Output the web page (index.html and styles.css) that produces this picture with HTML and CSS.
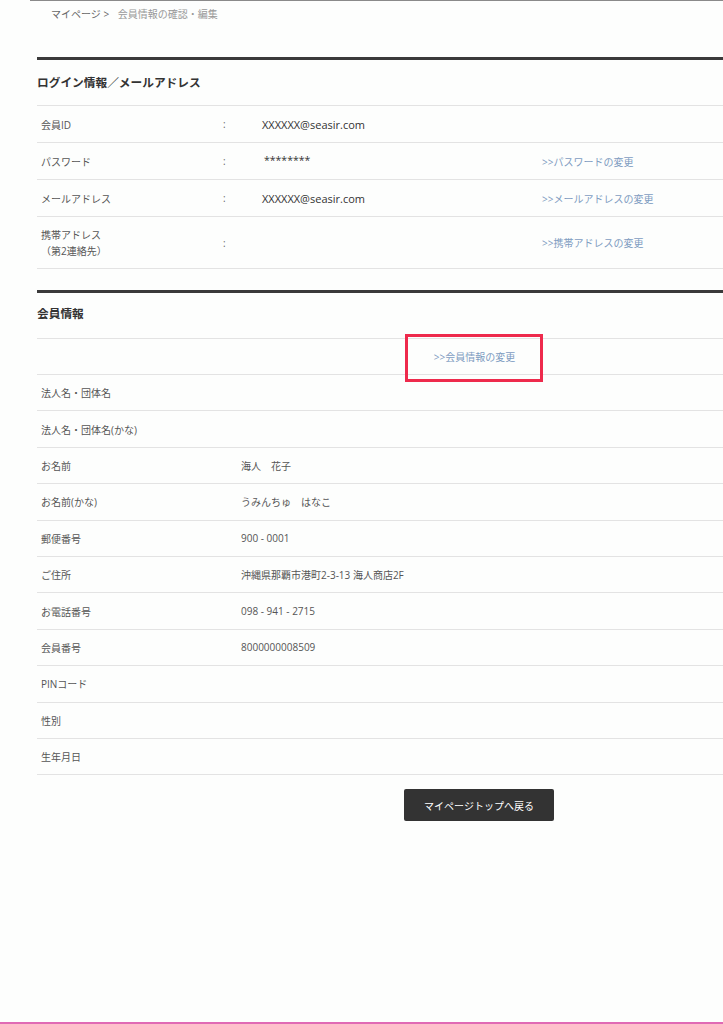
FILE: index.html
```html
<!DOCTYPE html>
<html lang="ja">
<head>
    <meta charset="UTF-8">
    <meta name="viewport" content="width=device-width, initial-scale=1.0">
    <title>会員情報の確認・編集</title>
    <link rel="stylesheet" href="styles.css">
</head>
<body>
    <div class="page">
        <div class="frame">
            <p class="breadcrumb">
                <span class="crumb-link">マイページ &gt;</span>
                <span class="crumb-current">会員情報の確認・編集</span>
            </p>

            <section class="block login">
                <h2>ログイン情報／メールアドレス</h2>
                <div class="login-row">
                    <div class="label">会員ID</div>
                    <div class="colon">:</div>
                    <div class="value strong">XXXXXX@seasir.com</div>
                    <div class="action"></div>
                </div>
                <div class="login-row">
                    <div class="label">パスワード</div>
                    <div class="colon">:</div>
                    <div class="value strong pass">********</div>
                    <div class="action"><a href="#">&gt;&gt;パスワードの変更</a></div>
                </div>
                <div class="login-row">
                    <div class="label">メールアドレス</div>
                    <div class="colon">:</div>
                    <div class="value strong">XXXXXX@seasir.com</div>
                    <div class="action"><a href="#">&gt;&gt;メールアドレスの変更</a></div>
                </div>
                <div class="login-row tall">
                    <div class="label">携帯アドレス<br>（第2連絡先）</div>
                    <div class="colon">:</div>
                    <div class="value"></div>
                    <div class="action"><a href="#">&gt;&gt;携帯アドレスの変更</a></div>
                </div>
            </section>

            <section class="block member">
                <h2>会員情報</h2>
                <div class="member-row edit-row">
                    <div class="cell label"></div>
                    <div class="cell edit">
                        <a href="#">&gt;&gt;会員情報の変更</a>
                        <span class="highlight"></span>
                    </div>
                </div>
                <div class="member-row">
                    <div class="cell label">法人名・団体名</div>
                    <div class="cell value"></div>
                    <div class="cell"></div>
                </div>
                <div class="member-row">
                    <div class="cell label">法人名・団体名(かな)</div>
                    <div class="cell value"></div>
                    <div class="cell"></div>
                </div>
                <div class="member-row">
                    <div class="cell label">お名前</div>
                    <div class="cell value">海人　花子</div>
                    <div class="cell"></div>
                </div>
                <div class="member-row">
                    <div class="cell label">お名前(かな)</div>
                    <div class="cell value">うみんちゅ　はなこ</div>
                    <div class="cell"></div>
                </div>
                <div class="member-row">
                    <div class="cell label">郵便番号</div>
                    <div class="cell value">900 - 0001</div>
                    <div class="cell"></div>
                </div>
                <div class="member-row">
                    <div class="cell label">ご住所</div>
                    <div class="cell value">沖縄県那覇市港町2-3-13 海人商店2F</div>
                    <div class="cell"></div>
                </div>
                <div class="member-row">
                    <div class="cell label">お電話番号</div>
                    <div class="cell value">098 - 941 - 2715</div>
                    <div class="cell"></div>
                </div>
                <div class="member-row">
                    <div class="cell label">会員番号</div>
                    <div class="cell value">8000000008509</div>
                    <div class="cell"></div>
                </div>
                <div class="member-row">
                    <div class="cell label">PINコード</div>
                    <div class="cell value"></div>
                    <div class="cell"></div>
                </div>
                <div class="member-row">
                    <div class="cell label">性別</div>
                    <div class="cell value"></div>
                    <div class="cell"></div>
                </div>
                <div class="member-row">
                    <div class="cell label">生年月日</div>
                    <div class="cell value"></div>
                    <div class="cell"></div>
                </div>
            </section>

            <div class="actions">
                <button onclick="location.href='#'">マイページトップへ戻る</button>
            </div>
        </div>
    </div>
</body>
</html>
```

FILE: styles.css
```css
html, body {
    margin: 0;
    height: 100%;
}

body {
    font-family: "Open Sans", "Noto Sans CJK JP", sans-serif;
    font-size: 10px;
    color: #555;
    background-color: #fdfefd;
}

.page {
    min-height: 100vh;
    box-sizing: border-box;
    border-bottom: 2px solid #e06ab4;
}

.frame {
    margin-left: 30px;
    padding-left: 7px;
    border-top: 1px solid #8a8a8a;
}

.breadcrumb {
    margin: 0;
    padding: 7px 0 0 14px;
    line-height: 12px;
}

.crumb-link {
    color: #666;
    margin-right: 6px;
}

.crumb-current {
    color: #999;
}

.block {
    border-top: 3px solid #3a3a3a;
}

.block h2 {
    margin: 0;
    font-size: 11.7px;
    font-weight: bold;
    color: #333;
    border-bottom: 1px solid #e3e3e3;
}

.login {
    margin-top: 37px;
}

.login h2 {
    line-height: 44px;
    padding-bottom: 1px;
}

.login-row {
    display: grid;
    grid-template-columns: 186px 39px 280px 1fr;
    align-items: center;
    height: 37px;
    box-sizing: border-box;
    border-bottom: 1px solid #e3e3e3;
}

.login-row.tall {
    height: 52px;
    line-height: 16px;
}

.login-row .label {
    padding-left: 4px;
}

.colon {
    color: #666;
}

.value.strong {
    color: #333;
    font-size: 11px;
}

.value.pass {
    padding-left: 2px;
    margin-top: -3px;
    font-size: 10.5px;
}

.action a,
.edit a {
    color: #7d9cc1;
    text-decoration: none;
}

.member {
    margin-top: 21px;
}

.member h2 {
    line-height: 41px;
    padding-bottom: 4px;
}

.member-row {
    display: grid;
    grid-template-columns: 193px 249px 1fr;
    height: 36.4px;
}

.edit-row {
    height: 36px;
}

.cell {
    display: flex;
    align-items: center;
    border-bottom: 1px solid #e3e3e3;
}

.member-row .label {
    padding-left: 4px;
}

.member-row .value {
    padding-left: 11px;
}

.edit {
    grid-column: 2 / 4;
    justify-content: center;
    position: relative;
}

.edit a {
    margin-left: -4px;
}

.highlight {
    position: absolute;
    left: 175px;
    top: -5px;
    width: 138px;
    height: 48px;
    box-sizing: border-box;
    border: 3px solid #ee2a4c;
}

.actions {
    display: grid;
    grid-template-columns: 193px 1fr;
    padding-top: 14px;
}

.actions button {
    grid-column: 2;
    justify-self: center;
    margin-left: 5px;
    width: 150px;
    height: 32px;
    background-color: #333;
    color: #fff;
    border: none;
    border-radius: 2px;
    font-family: "Open Sans", "Noto Sans CJK JP", sans-serif;
    font-size: 10px;
    cursor: pointer;
}
```
